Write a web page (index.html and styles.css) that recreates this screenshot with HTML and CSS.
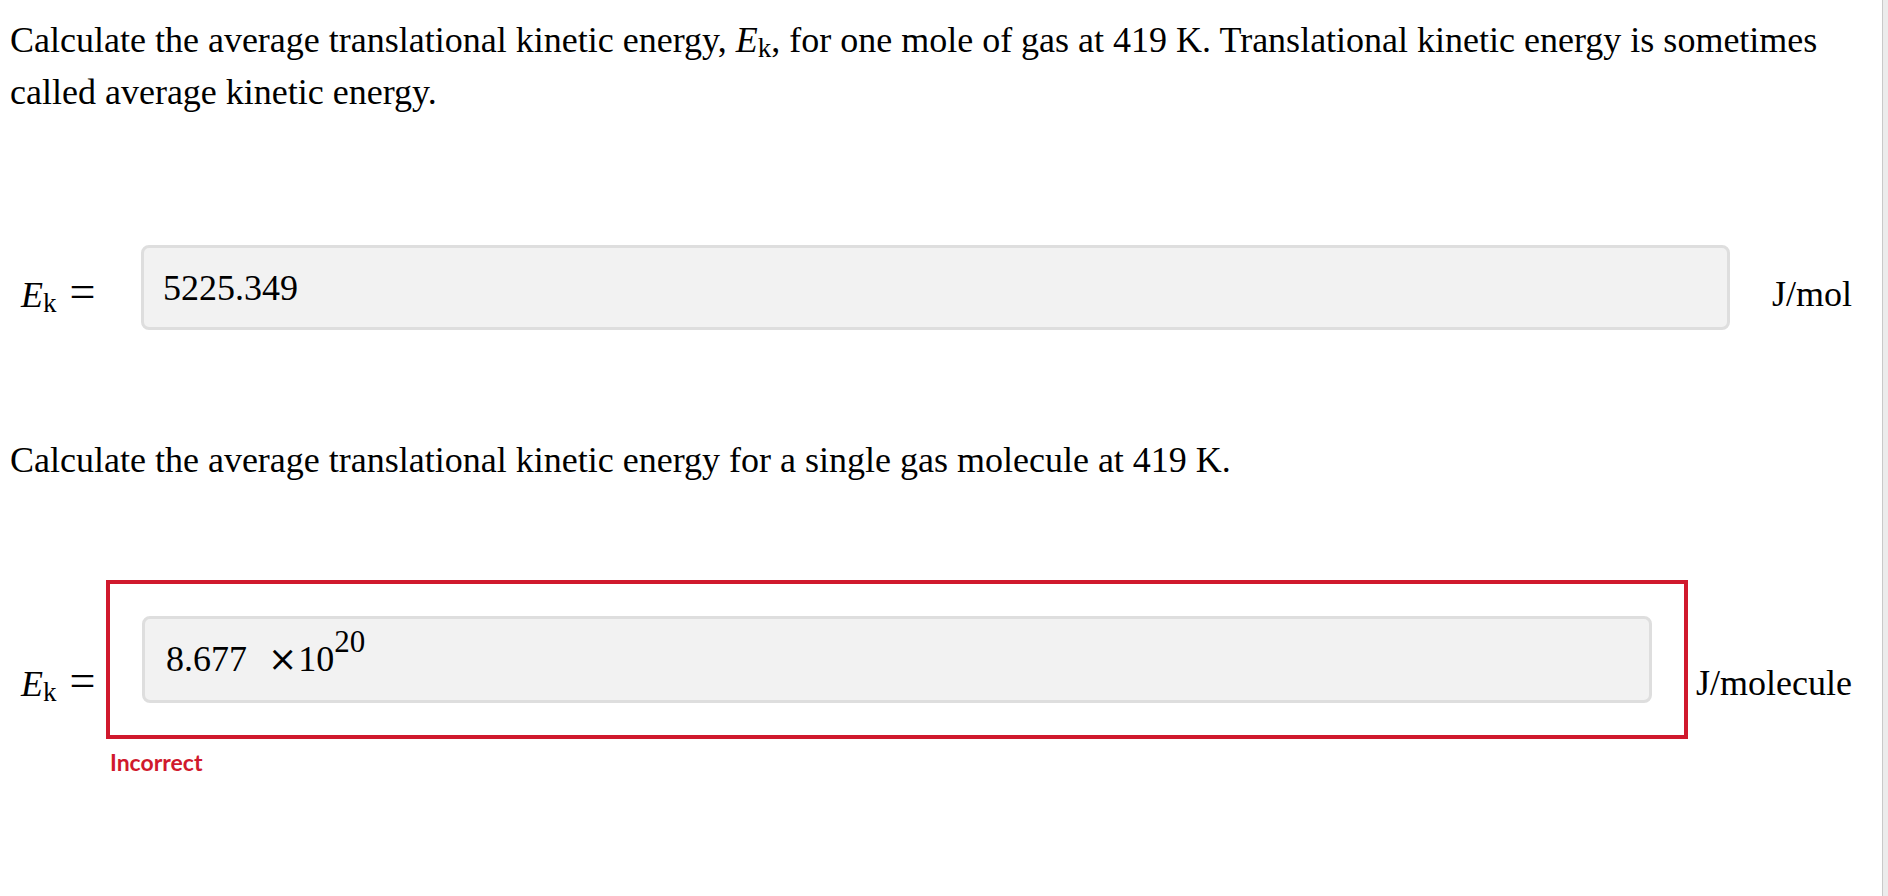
FILE: index.html
```html
<!DOCTYPE html>
<html lang="en">
<head>
  <meta charset="UTF-8" />
  <meta name="viewport" content="width=device-width, initial-scale=1.0"/>
  <title>Kinetic Energy Question</title>
  <link rel="stylesheet" href="styles.css">
</head>
<body>
  <div class="page">
    <p class="question first">
      Calculate the average translational kinetic energy, <span class="math"><i>E</i><sub>k</sub></span>, for one mole of gas at 419 K. Translational kinetic energy is sometimes<br>
      called average kinetic energy.
    </p>

    <div class="answer-row row-mol">
      <div class="label"><i>E</i><sub>k</sub><span class="eq">=</span></div>
      <div class="field">5225.349</div>
      <div class="unit">J/mol</div>
    </div>

    <p class="question second">
      Calculate the average translational kinetic energy for a single gas molecule at 419 K.
    </p>

    <div class="answer-row row-molecule">
      <div class="label"><i>E</i><sub>k</sub><span class="eq">=</span></div>
      <div class="field-wrap incorrect">
        <div class="field">8.677<span class="times"><span class="x">&times;</span>10<sup>20</sup></span></div>
      </div>
      <div class="unit">J/molecule</div>
    </div>
    <div class="feedback">Incorrect</div>
  </div>
</body>
</html>
```

FILE: styles.css
```css
* {
  margin: 0;
  padding: 0;
  box-sizing: border-box;
}

body {
  background: #ececec;
  font-family: 'Liberation Serif', 'Times New Roman', serif;
  font-size: 36px;
  line-height: 48px;
  color: #000;
}

.page {
  width: 1883px;
  min-height: 100vh;
  background: #fff;
  border-right: 1px solid #c9c9c9;
  padding: 14px 30px 0 10px;
}

.question {
  line-height: 52px;
}

.question.second {
  margin-top: 104px;
}

.math i,
.label i {
  font-style: italic;
}

sub {
  font-size: 27px;
  line-height: 0;
  vertical-align: -5px;
}

.answer-row {
  display: flex;
  align-items: flex-start;
}

.row-mol {
  margin-top: 127px;
}

.row-molecule {
  margin-top: 94px;
}

.label {
  padding-left: 11px;
  white-space: nowrap;
}

.eq {
  margin-left: 13px;
  font-size: 46px;
  line-height: 0;
}

.row-mol .label {
  width: 131px;
  margin-top: 26px;
}

.row-molecule .label {
  width: 96px;
  margin-top: 80px;
}

.field {
  flex: 1;
  height: 85px;
  background: #f2f2f2;
  border: 3px solid #dedede;
  border-radius: 8px;
  padding: 16px 0 0 19px;
}

.field-wrap {
  flex: 1;
  display: flex;
  border: 4px solid transparent;
  padding: 32px;
}

.field-wrap.incorrect {
  border-color: #d0192d;
}

.row-molecule .field {
  height: 87px;
  padding-left: 21px;
}

.times {
  margin-left: 21px;
}

.x {
  font-family: 'DejaVu Serif', serif;
  font-size: 35px;
  line-height: 0;
  margin-right: 1px;
}

sup {
  font-size: 31px;
  line-height: 0;
  vertical-align: 19px;
}

.unit {
  white-space: nowrap;
}

.row-mol .unit {
  width: 122px;
  text-align: right;
  margin-top: 25px;
}

.row-molecule .unit {
  margin-left: 8px;
  margin-top: 79px;
}

.feedback {
  margin: 8px 0 0 100px;
  font-family: Lato, 'Open Sans', sans-serif;
  font-weight: 700;
  font-size: 23px;
  line-height: 30px;
  color: #d0192d;
}
```
